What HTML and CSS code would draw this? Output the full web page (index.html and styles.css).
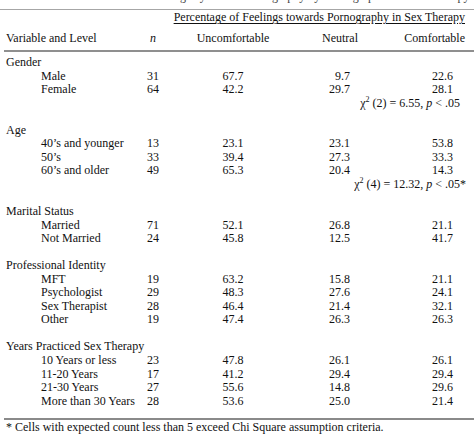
FILE: index.html
```html
<!DOCTYPE html>
<html>
<head>
<meta charset="utf-8">
<link rel="stylesheet" href="styles.css">
</head>
<body>
<div class="caption"><div class="caption-text">Feelings by Use of Pornography by Demographics in Sex Therapy Practice</div></div>
<div class="rule-top"></div>
<div class="table">
  <div class="row head1"><div class="span-head">Percentage of Feelings towards Pornography in Sex Therapy</div></div>
  <div class="row head2">
    <div class="c-label">Variable and Level</div>
    <div class="c-n"><i>n</i></div>
    <div class="c-u">Uncomfortable</div>
    <div class="c-nh">Neutral</div>
    <div class="c-ch">Comfortable</div>
  </div>
  <div class="rule-head"></div>
  <div class="body">
    <div class="row group"><div class="c-label">Gender</div></div>
    <div class="row item"><div class="c-label">Male</div><div class="c-n">31</div><div class="c-u">67.7</div><div class="c-ne">9.7</div><div class="c-co">22.6</div></div>
    <div class="row item"><div class="c-label">Female</div><div class="c-n">64</div><div class="c-u">42.2</div><div class="c-ne">29.7</div><div class="c-co">28.1</div></div>
    <div class="row"><div class="chi">χ<sup>2</sup> (2) = 6.55, <i>p</i> &lt; .05</div></div>
    <div class="row blank"></div>

    <div class="row group"><div class="c-label">Age</div></div>
    <div class="row item"><div class="c-label">40’s and younger</div><div class="c-n">13</div><div class="c-u">23.1</div><div class="c-ne">23.1</div><div class="c-co">53.8</div></div>
    <div class="row item"><div class="c-label">50’s</div><div class="c-n">33</div><div class="c-u">39.4</div><div class="c-ne">27.3</div><div class="c-co">33.3</div></div>
    <div class="row item"><div class="c-label">60’s and older</div><div class="c-n">49</div><div class="c-u">65.3</div><div class="c-ne">20.4</div><div class="c-co">14.3</div></div>
    <div class="row"><div class="chi star">χ<sup>2</sup> (4) = 12.32, <i>p</i> &lt; .05*</div></div>
    <div class="row blank"></div>

    <div class="row group"><div class="c-label">Marital Status</div></div>
    <div class="row item"><div class="c-label">Married</div><div class="c-n">71</div><div class="c-u">52.1</div><div class="c-ne">26.8</div><div class="c-co">21.1</div></div>
    <div class="row item"><div class="c-label">Not Married</div><div class="c-n">24</div><div class="c-u">45.8</div><div class="c-ne">12.5</div><div class="c-co">41.7</div></div>
    <div class="row blank"></div>

    <div class="row group"><div class="c-label">Professional Identity</div></div>
    <div class="row item"><div class="c-label">MFT</div><div class="c-n">19</div><div class="c-u">63.2</div><div class="c-ne">15.8</div><div class="c-co">21.1</div></div>
    <div class="row item"><div class="c-label">Psychologist</div><div class="c-n">29</div><div class="c-u">48.3</div><div class="c-ne">27.6</div><div class="c-co">24.1</div></div>
    <div class="row item"><div class="c-label">Sex Therapist</div><div class="c-n">28</div><div class="c-u">46.4</div><div class="c-ne">21.4</div><div class="c-co">32.1</div></div>
    <div class="row item"><div class="c-label">Other</div><div class="c-n">19</div><div class="c-u">47.4</div><div class="c-ne">26.3</div><div class="c-co">26.3</div></div>
    <div class="row blank"></div>

    <div class="row group"><div class="c-label">Years Practiced Sex Therapy</div></div>
    <div class="row item"><div class="c-label">10 Years or less</div><div class="c-n">23</div><div class="c-u">47.8</div><div class="c-ne">26.1</div><div class="c-co">26.1</div></div>
    <div class="row item"><div class="c-label">11-20 Years</div><div class="c-n">17</div><div class="c-u">41.2</div><div class="c-ne">29.4</div><div class="c-co">29.4</div></div>
    <div class="row item"><div class="c-label">21-30 Years</div><div class="c-n">27</div><div class="c-u">55.6</div><div class="c-ne">14.8</div><div class="c-co">29.6</div></div>
    <div class="row item"><div class="c-label">More than 30 Years</div><div class="c-n">28</div><div class="c-u">53.6</div><div class="c-ne">25.0</div><div class="c-co">21.4</div></div>
  </div>
  <div class="rule-bottom"></div>
  <div class="footnote">* Cells with expected count less than 5 exceed Chi Square assumption criteria.</div>
</div>
</body>
</html>
```

FILE: styles.css
```css
html, body {
  margin: 0;
  padding: 0;
  background: #ffffff;
}
body {
  width: 474px;
  font-family: "Liberation Serif", "Times New Roman", serif;
  font-size: 12px;
  color: #111111;
}
.caption {
  height: 6px;
  overflow: hidden;
}
.caption-text {
  margin-top: -11px;
  line-height: 14px;
  padding-left: 150px;
  white-space: nowrap;
  color: #444444;
}
.rule-top {
  height: 1px;
  margin-top: 3px;
  background: #a6a6a6;
}
.row {
  display: grid;
  grid-template-columns: 143px 20px 140px 74px 1fr;
  height: 13.56px;
  line-height: 13.56px;
  white-space: nowrap;
}
.head1 {
  height: 14px;
  line-height: 14px;
}
.head2 {
  height: 14px;
  line-height: 14px;
  margin-top: 7px;
}
.span-head {
  grid-column: 3 / 6;
  text-align: right;
  padding-right: 9px;
  text-decoration: underline;
  text-decoration-thickness: 1px;
  text-underline-offset: 2px;
}
.c-label {
  padding-left: 6px;
}
.item .c-label {
  padding-left: 41px;
}
.c-n {
  text-align: center;
}
.c-u {
  text-align: center;
}
.c-nh {
  text-align: center;
}
.c-ch {
  text-align: right;
  padding-right: 9px;
}
.c-ne {
  text-align: right;
  padding-right: 27px;
}
.c-co {
  text-align: right;
  padding-right: 21px;
}
.chi {
  grid-column: 4 / 6;
  text-align: right;
  padding-right: 14px;
}
.chi.star {
  padding-right: 8px;
}
.chi sup {
  font-size: 8px;
  line-height: 0;
  vertical-align: 5px;
}
.rule-head {
  height: 2px;
  margin: 5px 0 4px 4px;
  background: #8f8f8f;
}
.rule-bottom {
  height: 2px;
  margin: 10px 0 0 4px;
  background: #8a8a8a;
}
.footnote {
  padding-left: 6px;
  line-height: 14px;
  white-space: nowrap;
}
```
